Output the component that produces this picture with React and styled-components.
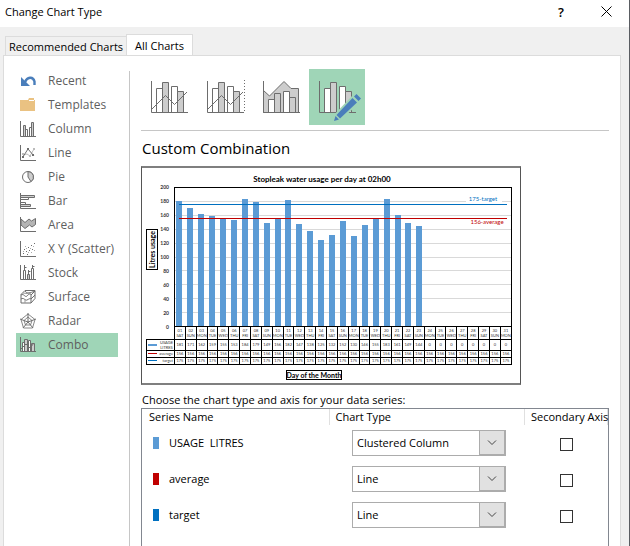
import { useState } from "react"
import styled, { createGlobalStyle } from "styled-components"

const GlobalStyle = createGlobalStyle`
  * {
    box-sizing: border-box;
  }
  body {
    margin: 0;
    background: #f0f0f0;
    color: #000;
    font-family: "Open Sans", "Noto Sans", sans-serif;
    font-size: 11px;
    line-height: 16px;
  }
`

const Dialog = styled.div`
  display: flex;
  flex-direction: column;
  min-height: 100vh;
  border-right: 1px solid #5a5d62;
`

// title bar
const TitleBar = styled.header`
  display: flex;
  align-items: center;
  height: 27px;
  padding: 0 15px 4px 5px;
  background: #fff;
`

const Title = styled.h1`
  flex: 1;
  margin: 0;
  font-size: 11px;
  font-weight: 400;
`

const WindowButton = styled.button`
  display: flex;
  align-items: center;
  justify-content: center;
  width: 16px;
  height: 16px;
  margin-left: 29px;
  padding: 0;
  border: 0;
  background: none;
  color: #000;
  font: inherit;
  font-size: 13px;
  font-weight: 600;
`

// tabs
const TabBar = styled.div`
  display: flex;
  align-items: flex-end;
  padding: 7px 5px 0;
`

const Tab = styled.button`
  height: ${(p) => (p.$active ? "22px" : "19px")};
  margin-bottom: ${(p) => (p.$active ? "-1px" : "0")};
  padding: ${(p) => (p.$active ? "0 8px" : "2px 3px 0")};
  border: 1px solid #dcdcdc;
  border-bottom: 0;
  border-right-width: ${(p) => (p.$active ? "1px" : "0")};
  background: ${(p) => (p.$active ? "#fff" : "#f0f0f0")};
  color: #000;
  font: inherit;
  line-height: 16px;
  white-space: nowrap;
`

const Panel = styled.div`
  display: flex;
  flex: 1;
  margin: 0 8px 0 3px;
  border: 1px solid #dcdcdc;
  border-bottom: 0;
  background: #fff;
`

// left category list
const Sidebar = styled.nav`
  flex: none;
  width: 126px;
  margin-top: 15px;
  padding: 0 11px 0 12px;
  border-right: 1px solid #c6c6c6;
`

const CategoryList = styled.div`
  margin-top: -2px;
`

const Category = styled.button`
  display: flex;
  align-items: center;
  gap: 12px;
  width: 100%;
  height: 24px;
  padding: 0 4px;
  border: 0;
  background: ${(p) => (p.$active ? "#9fd5b7" : "transparent")};
  color: #5f5f5f;
  font: inherit;
  font-size: 12px;
  white-space: nowrap;

  svg {
    flex: none;
  }
`

const Main = styled.main`
  display: flex;
  flex: 1;
  flex-direction: column;
  min-width: 0;
  padding: 13px 11px 0;
`

const Subtypes = styled.div`
  display: flex;
  padding-bottom: 5px;
  border-bottom: 1px solid #c6c6c6;
`

const Subtype = styled.button`
  width: 56px;
  height: 56px;
  padding: 0;
  border: 0;
  background: ${(p) => (p.$active ? "#9fd5b7" : "transparent")};

  svg {
    display: block;
  }
`

const Heading = styled.h2`
  margin: 6px 0 7px 1px;
  font-size: 15px;
  font-weight: 400;
  line-height: 22px;
`

// chart preview
const Preview = styled.figure`
  width: 100%;
  max-width: 380px;
  height: 219px;
  margin: 0;
  padding: 6px 8px 0 4px;
  border: 1px solid #555;
  border-top: 2px solid #7f7f7f;
  border-bottom: 2px solid #7f7f7f;
  font-family: Lato, sans-serif;
  font-weight: 700;
`

const ChartTitle = styled.figcaption`
  margin-bottom: 3px;
  padding-right: 14px;
  font-size: 8px;
  line-height: 10px;
  text-align: center;
`

const Plot = styled.div`
  display: flex;
  height: 140px;
`

const AxisTitle = styled.span`
  align-self: ${(p) => (p.$vertical ? "flex-end" : "auto")};
  width: ${(p) => (p.$vertical ? "12px" : "auto")};
  margin: ${(p) => (p.$vertical ? "0 0 57px 0" : "0")};
  padding: ${(p) => (p.$vertical ? "1px 0" : "0")};
  border: 1px solid #000;
  writing-mode: ${(p) => (p.$vertical ? "vertical-rl" : "horizontal-tb")};
  transform: ${(p) => (p.$vertical ? "rotate(180deg)" : "none")};
  font-size: 7px;
  line-height: ${(p) => (p.$vertical ? "10px" : "8px")};
  white-space: nowrap;
`

const Ticks = styled.div`
  display: flex;
  flex-direction: column;
  justify-content: space-between;
  width: 11px;
  margin: -3px 5px -3px 0;
  color: #333;
  font-size: 5px;
  line-height: 6px;
  text-align: right;
`

const PlotArea = styled.svg`
  flex: 1;
  min-width: 0;
  height: 140px;
`

const DataTable = styled.table`
  width: 100%;
  border-collapse: collapse;
  table-layout: fixed;
  color: #333;
  font-size: 4px;
  line-height: 5px;
  text-align: center;

  th,
  td {
    height: 7px;
    padding: 0;
    border: 1px solid #000;
    font-weight: 400;
    overflow: hidden;
  }
  thead th {
    height: 12px;
    border-top: 0;
  }
  thead td {
    width: 28px;
    border: 0;
  }
  tbody tr:first-child > * {
    height: 11px;
  }
`

const LegendKey = styled.span`
  display: flex;
  align-items: center;
  justify-content: space-between;
  padding: 0 1px;

  &::before {
    content: "";
    width: 9px;
    height: ${(p) => (p.$bar ? "2px" : "1px")};
    background: ${(p) => p.$color};
  }
`

const AxisFooter = styled.div`
  display: flex;
  justify-content: center;
  margin-top: 5px;
  padding-right: 30px;
`

// series grid
const SeriesLabel = styled.p`
  margin: 7px 0 0 1px;
`

const SeriesBox = styled.div`
  flex: 1;
  border: 1px solid #828790;
  border-bottom: 0;
`

const SeriesTable = styled.table`
  width: 100%;
  border-collapse: collapse;
  table-layout: fixed;

  th {
    height: 16px;
    padding: 0 0 0 7px;
    border-right: 1px solid #e0e0e0;
    font-weight: 400;
    text-align: left;
    white-space: nowrap;
  }
  th:nth-child(2) {
    width: 42%;
    padding-left: 6px;
  }
  th:nth-child(3) {
    width: 83px;
    padding-left: 6px;
  }
  td {
    height: 36px;
    padding: 0;
  }
  td:nth-child(2) {
    padding-left: 23px;
  }
  td:nth-child(3) {
    text-align: center;
  }
`

const SeriesName = styled.span`
  display: flex;
  align-items: center;
  gap: 10px;
  padding-left: 11px;
  white-space: pre;

  &::before {
    content: "";
    width: 6px;
    height: 12px;
    background: ${(p) => p.$color};
  }
`

const SelectWrap = styled.div`
  display: grid;
  grid-template-columns: 1fr 27px;
  width: 154px;
  height: 26px;

  select {
    grid-area: 1 / 1 / 2 / 3;
    padding: 0 30px 0 4px;
    border: 1px solid #acacac;
    border-radius: 0;
    background: #fff;
    color: #000;
    font: inherit;
    appearance: none;
  }
`

const Arrow = styled.span`
  display: flex;
  align-items: center;
  justify-content: center;
  grid-area: 1 / 2 / 2 / 3;
  border: 1px solid #acacac;
  border-right-width: 2px;
  border-bottom-width: 2px;
  background: #e1e1e1;
  pointer-events: none;
`

const Check = styled.input`
  display: inline-block;
  width: 13px;
  height: 13px;
  margin: 0;
  border: 1px solid #333;
  background: #fff;
  appearance: none;
  vertical-align: middle;

  &:checked {
    background: #333;
    box-shadow: inset 0 0 0 2px #fff;
  }
`

const GRAY = "#6d6d6d"
const SOFT = "#cdcdcd"

const icons = {
  Recent: (
    <>
      <path d="M1 4v9h9z" fill="#4a7ebb" />
      <path d="M5 9C7 4 13 3 14.500 8.500V12" fill="none" stroke="#4a7ebb" strokeWidth="2.400" />
    </>
  ),
  Templates: (
    <>
      <path d="M0 3h8l1-2h5v2h1v11H0z" fill="#eac282" />
      <path d="M9 3.500h5" stroke="#fff" />
    </>
  ),
  Column: (
    <g fill="none" stroke={GRAY}>
      <path d="M.5 0v15.500H16M3.500 15V4.500h2V15M5.500 8.500h2V15M9.500 15V6.500h2M11.500 15V1.500h2V15" />
      <path d="M4.500 5v10M12.500 2v13" stroke={SOFT} />
    </g>
  ),
  Line: (
    <g fill="none" stroke={GRAY}>
      <path d="M.5 0v15.500H16" />
      <path d="M3 10l4-1 3 2 4-7" stroke="#bbb" />
      <path d="M2.500 12.500L8 4l6 7" />
      <path d="M2 11h2v2H2zM7 3h2v2H7zM12 9h2v2h-2z" fill={GRAY} stroke="none" />
      <path d="M2 8h2v2H2zM9 10h2v2H9zM13 3h2v2h-2z" fill="#bbb" stroke="none" />
    </g>
  ),
  Pie: (
    <g stroke={GRAY}>
      <circle cx="8" cy="8" r="5.500" fill="#fff" />
      <path d="M8 8V2.500A5.500 5.500 0 0 1 11 12.600z" fill={SOFT} />
    </g>
  ),
  Bar: (
    <g fill="#fff" stroke={GRAY}>
      <path d="M.5 0v15.500H16" fill="none" />
      <path d="M.5 2.500h14v2H.5z" fill={SOFT} />
      <path d="M.5 4.500h8v2h-8zM.5 9.500h5v2h-5z" />
      <path d="M.5 11.500h10v2H.5z" fill={SOFT} />
    </g>
  ),
  Area: (
    <g stroke={GRAY}>
      <path d="M1 2l4 3.500L9 2l2.500 2L15.500 1.500v6L12 10l-2.500-2L5 11.500 1 8z" fill="#b5b5b5" />
      <path d="M.5 0v14.500H16" fill="none" />
    </g>
  ),
  "X Y (Scatter)": (
    <>
      <path d="M.5 0v15.500H16" fill="none" stroke={GRAY} />
      <path d="M3 12h1v1H3zM4 8h1v1H4zM6 10h1v1H6zM8 6h1v1H8zM9 9h1v1H9zM11 4h1v1h-1zM12 8h1v1h-1zM14 2h1v1h-1zM7 13h1v1H7z" fill={GRAY} />
      <path d="M5 5h1v1H5zM3 10h1v1H3zM8 11h1v1H8zM11 11h1v1h-1zM13 5h1v1h-1zM10 7h1v1h-1zM14 9h1v1h-1zM6 7h1v1H6z" fill="#aaa" />
    </>
  ),
  Stock: (
    <g fill="#fff" stroke={GRAY}>
      <path d="M.5 0v14.500H16" fill="none" />
      <path d="M4.500 0v5M8.500 5v5M12.500 0v3M4.500 2.500h2M8.500 6.500h2M12.500 1.500h2" fill="none" />
      <path d="M3.500 5.500h2v9h-2zM11.500 3.500h2v11h-2z" />
      <path d="M7.500 9.500h2v5h-2z" fill={SOFT} />
    </g>
  ),
  Surface: (
    <g fill="none" stroke={GRAY}>
      <path d="M1 5.500L5 1.500h10v8l-4 4.500H1z" fill="#fff" />
      <path d="M1 6c3-2 4 3 6 1s3-3 4-1l4-4M11 14V6M1 10c3-2 4 2 6 1s3-2 4-1l4-4M5 2c2 3 5 2 10 0" />
      <path d="M5 14v-4M3 4l8 1" stroke="#999" />
    </g>
  ),
  Radar: (
    <g fill="none" stroke="#888">
      <path d="M8 1l7 5.500L12.500 15h-9L1 6.500z" />
      <path d="M8 4l4 3.500-1.500 4.500h-5L4 7.500z" />
      <path d="M8 0v9M0 6l8 3 8-3M8 9l-5 6M8 9l5 6" stroke={GRAY} />
    </g>
  ),
  Combo: (
    <g fill="#fff" stroke={GRAY}>
      <path d="M2.500 5.500h2v9h-2zM8.500 3.500h2v11h-2z" />
      <path d="M4.500 2.500h3v12h-3zM11.500 6.500h3v8h-3z" fill={SOFT} />
      <path d="M.5 0v14.500H16M1 12l5-5 4 4 4-5" fill="none" />
    </g>
  ),
}

const Axes = () => <path d="M10.500 12v31.500H47" fill="none" stroke={GRAY} />

const Columns = () => (
  <g stroke={GRAY}>
    <path d="M15.500 19.500h6v24h-6zM30.500 17.500h6v26h-6z" fill="#fff" />
    <path d="M21.500 13.500h6v30h-6zM36.500 22.500h6v21h-6z" fill={SOFT} />
  </g>
)

const subtypes = [
  {
    name: "Clustered Column - Line",
    art: (
      <>
        <Columns />
        <Axes />
        <path d="M11 40l13.500-13.500 9 9L46 23" fill="none" stroke={GRAY} />
      </>
    ),
  },
  {
    name: "Clustered Column - Line on Secondary Axis",
    art: (
      <>
        <Columns />
        <Axes />
        <path d="M11 40l13.500-13.500 9 9L46 23" fill="none" stroke={GRAY} />
        <path d="M47.500 11v33" stroke={GRAY} strokeDasharray="1 2" />
      </>
    ),
  },
  {
    name: "Stacked Area - Clustered Column",
    art: (
      <g stroke={GRAY}>
        <path d="M10.500 21.500l6 5.500L31 12.500l7 7h7.500v24h-35z" fill={SOFT} />
        <path d="M15.500 30.500h6v13h-6zM30.500 22.500h6v21h-6z" fill="#fff" />
        <path d="M21.500 24.500h6v19h-6zM36.500 28.500h6v15h-6z" fill={SOFT} />
        <Axes />
      </g>
    ),
  },
  {
    name: "Custom Combination",
    art: (
      <>
        <Columns />
        <Axes />
        <path d="M25 52l1-5 19-20 3-3 5 5-3 3-20 19z" fill="#9fd5b7" stroke="#9fd5b7" strokeWidth="3" />
        <path d="M25 52l1.500-5 3.500 3.500zM27.500 46L43.500 29l4.500 4.500L31 49.500zM45 27.500l2.500-2.500 4.500 4.500-2.500 2.500z" fill="#4a7ebb" />
      </>
    ),
  },
]

const usage = [
  181, 171, 162, 159, 155, 153, 184, 179, 149, 156, 182, 147, 138, 125, 132, 152,
  130, 146, 155, 183, 161, 149, 144, 0, 0, 0, 0, 0, 0, 0, 0,
]
const weekdays = ["SAT", "SUN", "MON", "TUE", "WED", "THU", "FRI"]
const ticks = [200, 180, 160, 140, 120, 100, 80, 60, 40, 20, 0]

const series = [
  { name: "USAGE  LITRES", type: "Clustered Column", color: "#5b9bd5" },
  { name: "average", type: "Line", color: "#c00000" },
  { name: "target", type: "Line", color: "#0070c0" },
]

const WIDTH = 338
const STEP = WIDTH / usage.length
const toY = (value) => 139.5 - (value / 200) * 139

function UsageChart() {
  return (
    <Preview>
      <ChartTitle>Stopleak water usage per day at 02h00</ChartTitle>
      <Plot>
        <AxisTitle $vertical>Litres usage</AxisTitle>
        <Ticks>
          {ticks.map((tick) => (
            <span key={tick}>{tick}</span>
          ))}
        </Ticks>
        <PlotArea viewBox={`0 0 ${WIDTH} 140`} preserveAspectRatio="none">
          <g shapeRendering="crispEdges">
            {ticks.map((tick) => (
              <path key={tick} d={`M0 ${toY(tick)}H${WIDTH}`} stroke="#d9d9d9" />
            ))}
            {usage.map((value, i) => (
              <rect
                key={i}
                x={(i + 0.5) * STEP - 3}
                y={toY(value)}
                width="6"
                height={139.5 - toY(value)}
                fill="#5b9bd5"
              />
            ))}
            <path d={`M5 ${toY(175)}H333`} stroke="#0070c0" />
            <path d={`M5 ${toY(156)}H333`} stroke="#c00000" />
            <rect x="292" y="8" width="36" height="7" fill="#fff" />
            <path d={`M.5 .5H${WIDTH - 0.5}V139.500H.5z`} fill="none" stroke="#000" />
          </g>
          <g fontSize="6" fontWeight="400" textAnchor="middle">
            <text x="309" y="14" fill="#0070c0">175-target</text>
            <text x="313" y="37" fill="#c00000">156-average</text>
          </g>
        </PlotArea>
      </Plot>
      <DataTable>
        <thead>
          <tr>
            <td />
            {usage.map((_, i) => (
              <th key={i} scope="col">
                {String(i + 1).padStart(2, "0")}
                <br />
                {weekdays[i % 7]}
              </th>
            ))}
          </tr>
        </thead>
        <tbody>
          <tr>
            <th scope="row">
              <LegendKey $color="#5b9bd5" $bar>
                USAGE
                <br />
                LITRES
              </LegendKey>
            </th>
            {usage.map((value, i) => (
              <td key={i}>{value}</td>
            ))}
          </tr>
          <tr>
            <th scope="row">
              <LegendKey $color="#c00000">average</LegendKey>
            </th>
            {usage.map((_, i) => (
              <td key={i}>156</td>
            ))}
          </tr>
          <tr>
            <th scope="row">
              <LegendKey $color="#0070c0">target</LegendKey>
            </th>
            {usage.map((_, i) => (
              <td key={i}>175</td>
            ))}
          </tr>
        </tbody>
      </DataTable>
      <AxisFooter>
        <AxisTitle>Day of the Month</AxisTitle>
      </AxisFooter>
    </Preview>
  )
}

export default function App() {
  const [category, setCategory] = useState("Combo")
  const [subtype, setSubtype] = useState(3)

  return (
    <Dialog>
      <GlobalStyle />
      <TitleBar>
        <Title>Change Chart Type</Title>
        <WindowButton aria-label="Help">?</WindowButton>
        <WindowButton aria-label="Close">
          <svg width="11" height="11" viewBox="0 0 11 11">
            <path d="M.5 .5l10 10M10.500 .5l-10 10" stroke="#000" />
          </svg>
        </WindowButton>
      </TitleBar>
      <TabBar role="tablist">
        <Tab role="tab" aria-selected="false">Recommended Charts</Tab>
        <Tab role="tab" aria-selected="true" $active>All Charts</Tab>
      </TabBar>
      <Panel>
        <Sidebar>
          <CategoryList>
            {Object.keys(icons).map((name) => (
              <Category key={name} $active={name === category} onClick={() => setCategory(name)}>
                <svg width="16" height="16" viewBox="0 0 16 16">{icons[name]}</svg>
                {name}
              </Category>
            ))}
          </CategoryList>
        </Sidebar>
        <Main>
          <Subtypes>
            {subtypes.map((item, i) => (
              <Subtype key={item.name} aria-label={item.name} $active={i === subtype} onClick={() => setSubtype(i)}>
                <svg width="56" height="56" viewBox="0 0 56 56">{item.art}</svg>
              </Subtype>
            ))}
          </Subtypes>
          <Heading>{subtypes[subtype].name}</Heading>
          <UsageChart />
          <SeriesLabel>Choose the chart type and axis for your data series:</SeriesLabel>
          <SeriesBox>
            <SeriesTable>
              <thead>
                <tr>
                  <th scope="col">Series Name</th>
                  <th scope="col">Chart Type</th>
                  <th scope="col">Secondary Axis</th>
                </tr>
              </thead>
              <tbody>
                {series.map((item) => (
                  <tr key={item.name}>
                    <td>
                      <SeriesName $color={item.color}>{item.name}</SeriesName>
                    </td>
                    <td>
                      <SelectWrap>
                        <select aria-label={`Chart type for ${item.name}`} defaultValue={item.type}>
                          <option>Clustered Column</option>
                          <option>Line</option>
                        </select>
                        <Arrow>
                          <svg width="10" height="6" viewBox="0 0 10 6">
                            <path d="M1 .5l4 4 4-4" fill="none" stroke="#444" />
                          </svg>
                        </Arrow>
                      </SelectWrap>
                    </td>
                    <td>
                      <Check type="checkbox" aria-label={`Secondary axis for ${item.name}`} />
                    </td>
                  </tr>
                ))}
              </tbody>
            </SeriesTable>
          </SeriesBox>
        </Main>
      </Panel>
    </Dialog>
  )
}
